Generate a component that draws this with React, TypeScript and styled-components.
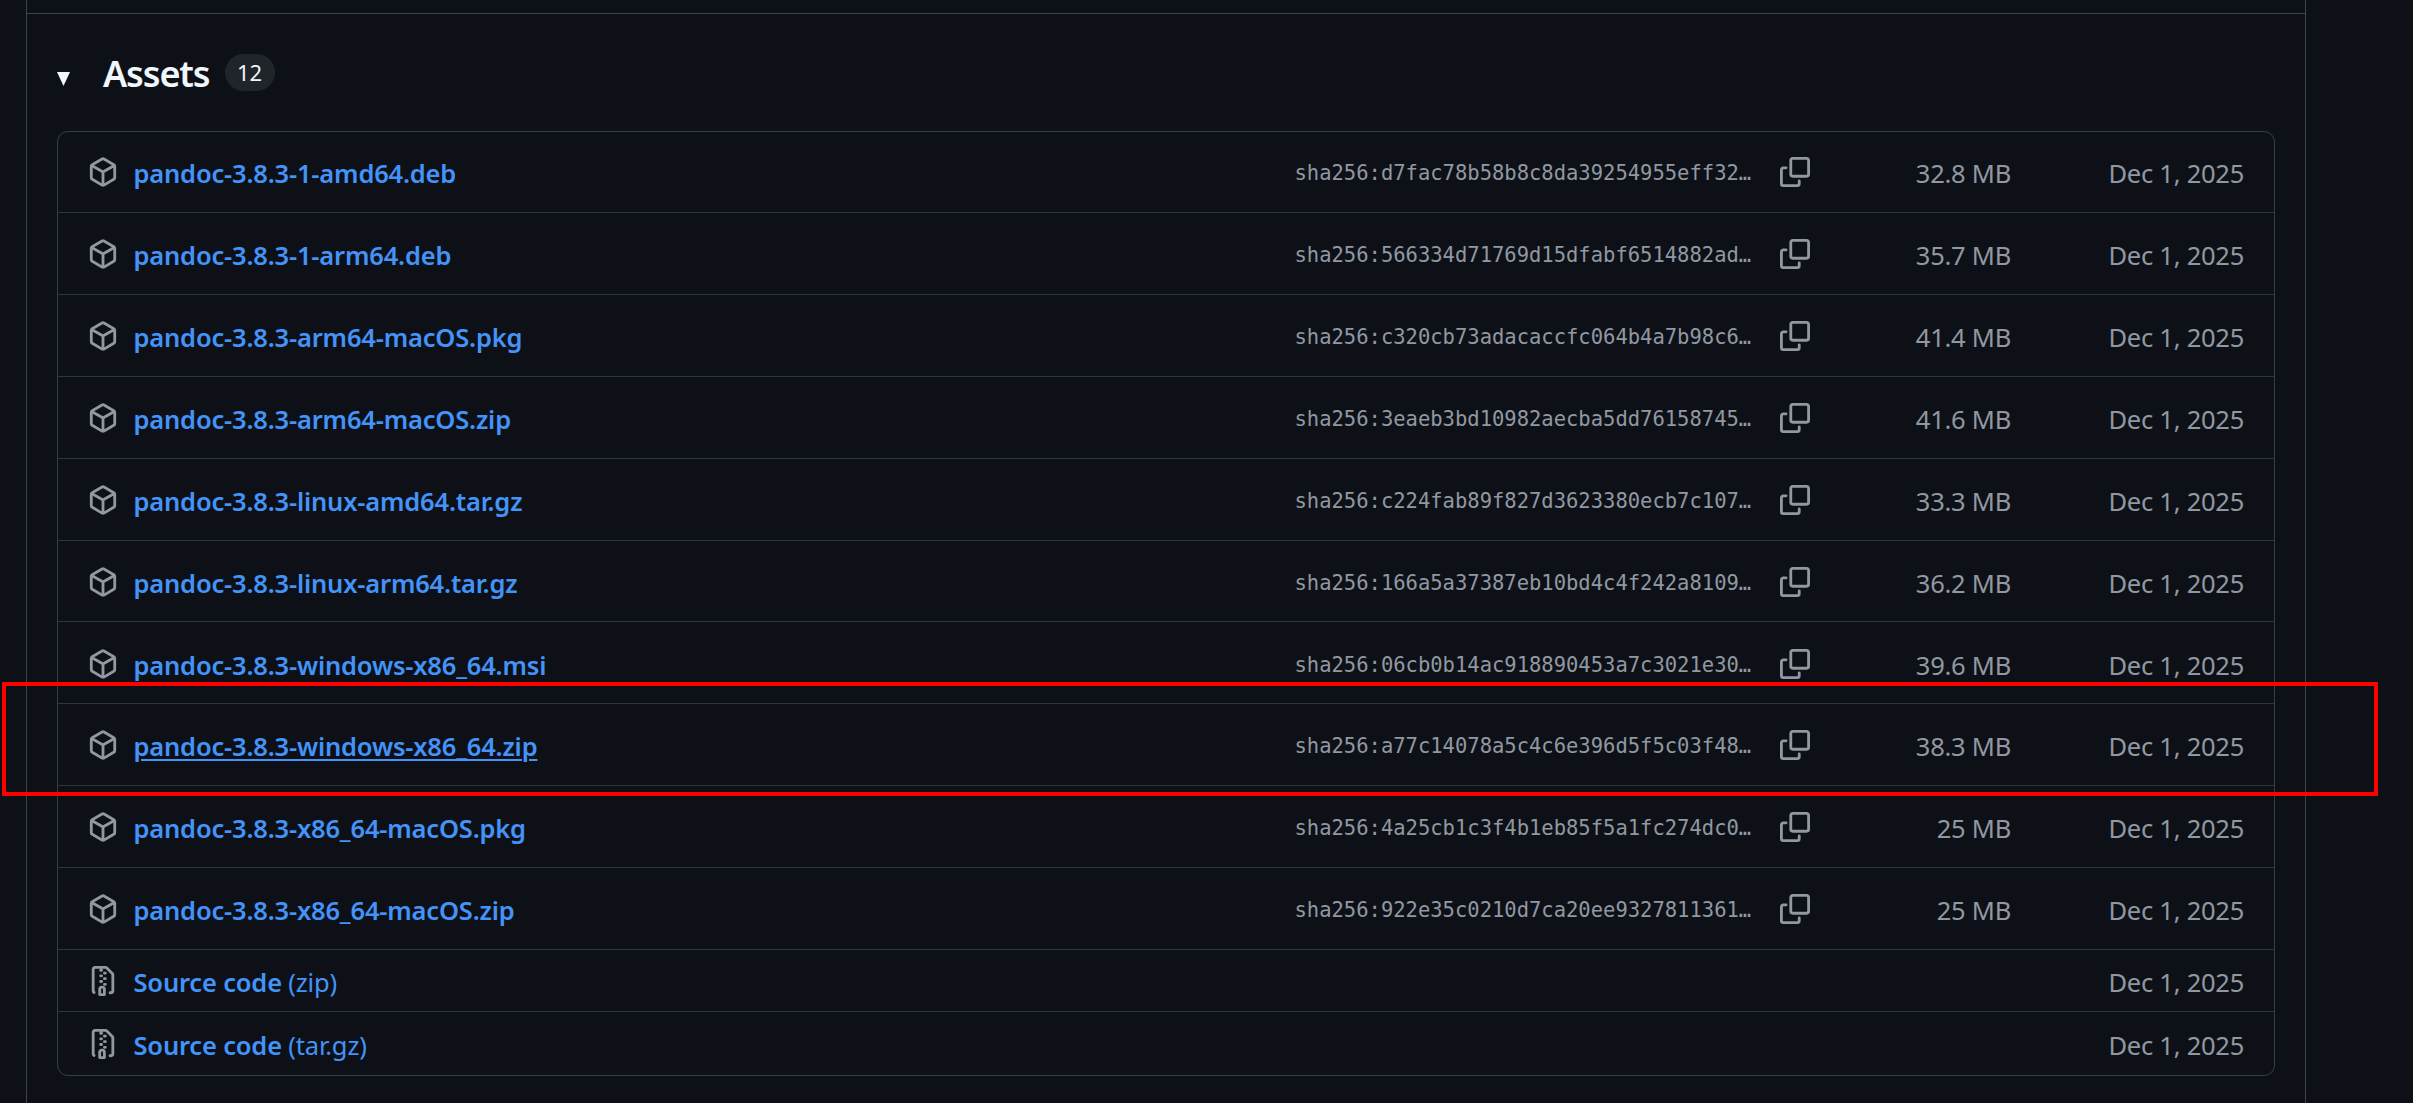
import React from 'react';
import styled, { createGlobalStyle } from 'styled-components';

interface Asset {
  name: string;
  digest: string;
  size: string;
  hovered?: boolean;
}

const RELEASE_DATE = 'Dec 1, 2025';

const assets: Asset[] = [
  { name: 'pandoc-3.8.3-1-amd64.deb', digest: 'sha256:d7fac78b58b8c8da39254955eff32…', size: '32.8 MB' },
  { name: 'pandoc-3.8.3-1-arm64.deb', digest: 'sha256:566334d71769d15dfabf6514882ad…', size: '35.7 MB' },
  { name: 'pandoc-3.8.3-arm64-macOS.pkg', digest: 'sha256:c320cb73adacaccfc064b4a7b98c6…', size: '41.4 MB' },
  { name: 'pandoc-3.8.3-arm64-macOS.zip', digest: 'sha256:3eaeb3bd10982aecba5dd76158745…', size: '41.6 MB' },
  { name: 'pandoc-3.8.3-linux-amd64.tar.gz', digest: 'sha256:c224fab89f827d3623380ecb7c107…', size: '33.3 MB' },
  { name: 'pandoc-3.8.3-linux-arm64.tar.gz', digest: 'sha256:166a5a37387eb10bd4c4f242a8109…', size: '36.2 MB' },
  { name: 'pandoc-3.8.3-windows-x86_64.msi', digest: 'sha256:06cb0b14ac918890453a7c3021e30…', size: '39.6 MB' },
  {
    name: 'pandoc-3.8.3-windows-x86_64.zip',
    digest: 'sha256:a77c14078a5c4c6e396d5f5c03f48…',
    size: '38.3 MB',
    hovered: true,
  },
  { name: 'pandoc-3.8.3-x86_64-macOS.pkg', digest: 'sha256:4a25cb1c3f4b1eb85f5a1fc274dc0…', size: '25 MB' },
  { name: 'pandoc-3.8.3-x86_64-macOS.zip', digest: 'sha256:922e35c0210d7ca20ee9327811361…', size: '25 MB' },
];

const sources = ['(zip)', '(tar.gz)'];

const PackageIcon = () => (
  <StIcon viewBox="0 0 16 16">
    <path d="m8.878.392 5.25 3.045c.54.314.872.89.872 1.514v6.098a1.75 1.75 0 0 1-.872 1.514l-5.25 3.045a1.75 1.75 0 0 1-1.756 0l-5.25-3.045A1.75 1.75 0 0 1 1 11.049V4.951c0-.624.332-1.201.872-1.514L7.122.392a1.75 1.75 0 0 1 1.756 0ZM7.875 1.69l-4.63 2.685L8 7.133l4.755-2.758-4.63-2.685a.248.248 0 0 0-.25 0ZM2.5 5.677v5.372c0 .09.047.171.125.216l4.625 2.683V8.432Zm6.25 8.271 4.625-2.683a.25.25 0 0 0 .125-.216V5.677L8.75 8.432Z" />
  </StIcon>
);

const CopyIcon = () => (
  <StIcon viewBox="0 0 16 16">
    <path d="M0 6.75C0 5.784.784 5 1.75 5h1.5a.75.75 0 0 1 0 1.5h-1.5a.25.25 0 0 0-.25.25v7.5c0 .138.112.25.25.25h7.5a.25.25 0 0 0 .25-.25v-1.5a.75.75 0 0 1 1.5 0v1.5A1.75 1.75 0 0 1 9.25 16h-7.5A1.75 1.75 0 0 1 0 14.25Z" />
    <path d="M5 1.75C5 .784 5.784 0 6.75 0h7.5C15.216 0 16 .784 16 1.75v7.5A1.75 1.75 0 0 1 14.25 11h-7.5A1.75 1.75 0 0 1 5 9.25Zm1.75-.25a.25.25 0 0 0-.25.25v7.5c0 .138.112.25.25.25h7.5a.25.25 0 0 0 .25-.25v-7.5a.25.25 0 0 0-.25-.25Z" />
  </StIcon>
);

const FileZipIcon = () => (
  <StIcon viewBox="0 0 16 16">
    <path d="M3.5 1.75v11.5c0 .09.048.173.126.217a.75.75 0 0 1-.752 1.298A1.748 1.748 0 0 1 2 13.25V1.75C2 .784 2.784 0 3.75 0h5.586c.464 0 .909.185 1.237.513l2.914 2.914c.329.328.513.773.513 1.237v8.586A1.75 1.75 0 0 1 12.25 15h-.5a.75.75 0 0 1 0-1.5h.5a.25.25 0 0 0 .25-.25V4.664a.25.25 0 0 0-.073-.177L9.513 1.573a.25.25 0 0 0-.177-.073H7.25a.75.75 0 0 1 0 1.5h-.5a.75.75 0 0 1 0-1.5h-3a.25.25 0 0 0-.25.25Zm3.75 8.75h.5c.966 0 1.75.784 1.75 1.75v3a.75.75 0 0 1-.75.75h-2.5a.75.75 0 0 1-.75-.75v-3c0-.966.784-1.75 1.75-1.75ZM6 5.25a.75.75 0 0 1 .75-.75h.5a.75.75 0 0 1 0 1.5h-.5A.75.75 0 0 1 6 5.25Zm.75 2.25h.5a.75.75 0 0 1 0 1.5h-.5a.75.75 0 0 1 0-1.5ZM8 6.75A.75.75 0 0 1 8.75 6h.5a.75.75 0 0 1 0 1.5h-.5A.75.75 0 0 1 8 6.75ZM8.75 3h.5a.75.75 0 0 1 0 1.5h-.5a.75.75 0 0 1 0-1.5ZM8 9.75A.75.75 0 0 1 8.75 9h.5a.75.75 0 0 1 0 1.5h-.5A.75.75 0 0 1 8 9.75Zm-1 2.5v2.25h1v-2.25a.25.25 0 0 0-.25-.25h-.5a.25.25 0 0 0-.25.25Z" />
  </StIcon>
);

const App = () => (
  <StPage>
    <GlobalStyle />
    <StReleaseCard>
      <StBodyEnd />
      <StAssets>
        <StSummary>
          <StCaret viewBox="0 0 13 14">
            <path d="M0 0h13L6.5 14Z" />
          </StCaret>
          <StTitle>Assets</StTitle>
          <StCounter>12</StCounter>
        </StSummary>
        <StList>
          {assets.map(({ name, digest, size, hovered }) => (
            <StRow key={name}>
              <PackageIcon />
              <StLink $hovered={hovered}>{name}</StLink>
              <StDigest>{digest}</StDigest>
              <CopyIcon />
              <StMeta>{size}</StMeta>
              <StMeta>{RELEASE_DATE}</StMeta>
            </StRow>
          ))}
          {sources.map((format) => (
            <StSourceRow key={format}>
              <FileZipIcon />
              <StLink>
                Source code <StFormat>{format}</StFormat>
              </StLink>
              <StMeta>{RELEASE_DATE}</StMeta>
            </StSourceRow>
          ))}
        </StList>
      </StAssets>
    </StReleaseCard>
    <StHighlight />
  </StPage>
);

export default App;

const GlobalStyle = createGlobalStyle`
  * {
    box-sizing: border-box;
  }

  body {
    margin: 0;
    background-color: #0d1117;
    font-family: 'Noto Sans', 'Open Sans', sans-serif;
  }
`;

const StPage = styled.div`
  position: relative;
  height: 1103px;
  padding: 0 107px 0 26px;
  overflow: hidden;
`;

const StReleaseCard = styled.section`
  height: 100%;
  border: solid #3d444d;
  border-width: 0 1px;
`;

const StBodyEnd = styled.div`
  height: 14px;
  border-bottom: 1px solid #3d444d;
`;

const StAssets = styled.div`
  padding: 0 30px;
`;

const StSummary = styled.header`
  display: flex;
  align-items: center;
  height: 117px;
  padding-bottom: 1px;
`;

const StCaret = styled.svg`
  width: 13px;
  height: 14px;
  margin: 13px 33px 0 0;
  fill: #f0f6fc;
`;

const StTitle = styled.h3`
  margin: 3px 0 0;
  color: #f0f6fc;
  font-size: 36px;
  font-weight: 600;
  line-height: 56px;
  letter-spacing: -1.1px;
`;

const StCounter = styled.span`
  display: flex;
  align-items: center;
  justify-content: center;
  width: 50px;
  height: 37px;
  margin-left: 15px;

  background-color: #20252c;
  border-radius: 19px;

  color: #f0f6fc;
  font-size: 22px;
`;

const StList = styled.ul`
  height: 945px;
  margin: 0;
  padding: 0;
  border: 1px solid #363d45;
  border-radius: 11px;
  list-style: none;
`;

const StRow = styled.li`
  display: grid;
  grid-template-columns: 45.5px 1161px 485.5px 34px 1fr 233px;
  align-items: center;
  height: 81.85px;
  padding: 1.5px 30px 0;
  border-top: 1px solid #2f353c;

  &:first-child {
    height: 80.2px;
    padding-top: 0;
    border-top: none;
  }
`;

const StSourceRow = styled(StRow)`
  grid-template-columns: 45.5px 1fr 233px;
  height: 62.7px;
`;

const StIcon = styled.svg`
  display: block;
  width: 30px;
  height: 30px;
  fill: #9198a1;
`;

const StLink = styled.a<{ $hovered?: boolean }>`
  justify-self: start;
  margin-top: 2px;

  color: #4493f8;
  font-size: 25.5px;
  font-weight: 600;
  line-height: 38px;
  letter-spacing: -0.18px;
  white-space: nowrap;
  text-decoration: ${({ $hovered }) => ($hovered ? 'underline' : 'none')};
  text-decoration-thickness: 2px;
  text-underline-offset: 3px;
`;

const StFormat = styled.span`
  font-weight: 400;
`;

const StDigest = styled.span`
  margin-top: 2px;
  color: #9198a1;
  font-family: 'DejaVu Sans Mono', monospace;
  font-size: 20.5px;
  white-space: nowrap;
`;

const StMeta = styled.span`
  margin-top: 2px;
  color: #9198a1;
  font-size: 25.5px;
  line-height: 38px;
  letter-spacing: -0.25px;
  text-align: right;
  white-space: nowrap;
`;

// drawn over the list, marks the asset to download
const StHighlight = styled.div`
  position: absolute;
  top: 682px;
  left: 2px;
  width: 2376px;
  height: 114px;
  border: 4px solid #fe0000;
  pointer-events: none;
`;
